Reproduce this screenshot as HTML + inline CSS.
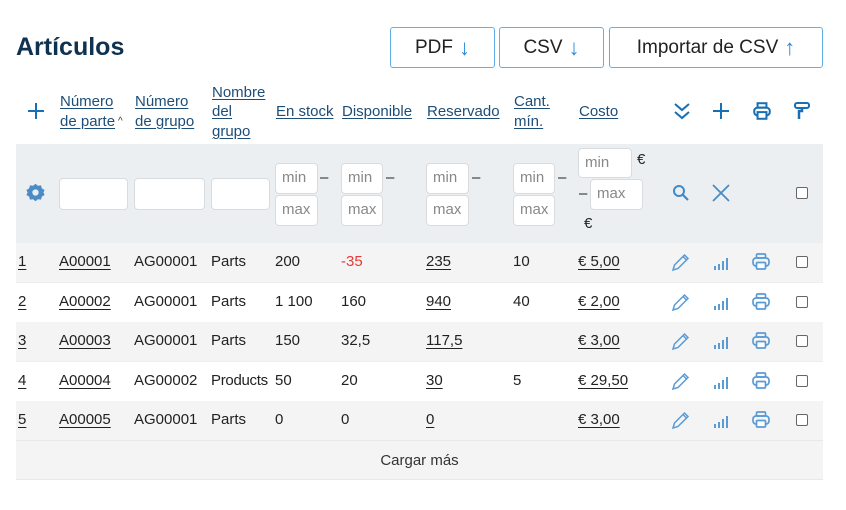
<!DOCTYPE html>
<html><head><meta charset="utf-8"><style>
*{margin:0;padding:0;box-sizing:border-box}
body{width:846px;height:510px;background:#fff;font-family:"Liberation Sans",sans-serif;font-size:15px;color:#222;position:relative;overflow:hidden}
.a{position:absolute;white-space:nowrap;line-height:20px}
.h{color:#1d4e78;text-decoration:underline;text-underline-offset:2px}
.u{text-decoration:underline;text-underline-offset:3px}
.btn{position:absolute;top:27px;height:41px;border:1px solid #5fb0ea;border-radius:3px;font-size:19px;color:#222;display:flex;align-items:center;justify-content:center;gap:6px}
.btn b{color:#2a8ad8;font-size:22px;font-weight:bold}
.in{position:absolute;background:#fff;border:1px solid #d8dcdf;border-radius:4px;color:#888;font-size:15px;padding-left:6px;line-height:28px}
.cb{position:absolute;width:12px;height:12px;border:1.5px solid #666;border-radius:2px;background:#fff}
.row{position:absolute;left:16px;width:807px;height:40px}
svg{position:absolute}
</style></head><body>
<div class="a" style="left:16px;top:32px;font-size:25px;font-weight:bold;color:#0f3250;line-height:30px">Artículos</div>
<div class="btn" style="left:390px;width:105px">PDF <b>↓</b></div>
<div class="btn" style="left:499px;width:105px">CSV <b>↓</b></div>
<div class="btn" style="left:609px;width:214px">Importar de CSV <b>↑</b></div>

<!-- header -->
<svg style="left:27px;top:102px" width="18" height="18"><path d="M9 1v16M1 9h16" stroke="#1a6fb4" stroke-width="2"/></svg>
<div class="a h" style="left:60px;top:92px">Número</div>
<div class="a h" style="left:60px;top:112px">de parte</div><div class="a" style="left:118px;top:112px;font-size:10px;color:#333">^</div>
<div class="a h" style="left:135px;top:92px">Número</div>
<div class="a h" style="left:135px;top:112px">de grupo</div>
<div class="a h" style="left:212px;top:83px">Nombre</div>
<div class="a h" style="left:212px;top:102px">del</div>
<div class="a h" style="left:212px;top:122px">grupo</div>
<div class="a h" style="left:276px;top:102px">En stock</div>
<div class="a h" style="left:342px;top:102px">Disponible</div>
<div class="a h" style="left:427px;top:102px">Reservado</div>
<div class="a h" style="left:514px;top:92px">Cant.</div>
<div class="a h" style="left:514px;top:112px">mín.</div>
<div class="a h" style="left:579px;top:102px">Costo</div>
<svg style="left:673px;top:101px" width="18" height="20"><path d="M2 3l7 6 7-6M2 11l7 6 7-6" fill="none" stroke="#1a6fb4" stroke-width="2"/></svg>
<svg style="left:712px;top:102px" width="18" height="18"><path d="M9 1v16M1 9h16" stroke="#1a6fb4" stroke-width="2"/></svg>
<svg style="left:752px;top:101px" width="20" height="20" viewBox="0 0 18 18"><rect x="5" y="2" width="8" height="4" fill="none" stroke="#1a6fb4" stroke-width="1.8"/><rect x="2" y="6" width="14" height="7" rx="3" fill="none" stroke="#1a6fb4" stroke-width="1.8"/><rect x="5" y="10" width="8" height="6" fill="#fff" stroke="#1a6fb4" stroke-width="1.8"/></svg>
<svg style="left:793px;top:101px" width="18" height="20"><rect x="2" y="2" width="14" height="5" rx="2" fill="none" stroke="#1a6fb4" stroke-width="2"/><path d="M9 7v3H6v8" fill="none" stroke="#1a6fb4" stroke-width="2.5"/></svg>

<!-- filter band -->
<div style="position:absolute;left:16px;top:144px;width:807px;height:99px;background:#eceff2"></div>
<svg style="left:26px;top:183px" width="19" height="19" viewBox="0 0 24 24"><path fill="#4b8cc4" d="M12 1l3 2.5 4-.5 1 3.8 3.5 2L22 12l1.5 3.2-3.5 2-1 3.8-4-.5L12 23l-3-2.5-4 .5-1-3.8-3.5-2L2 12 .5 8.8l3.5-2 1-3.8 4 .5z"/><circle cx="12" cy="12" r="4" fill="#eceff2"/></svg>
<div class="in" style="left:59px;top:178px;width:69px;height:32px"></div>
<div class="in" style="left:134px;top:178px;width:71px;height:32px"></div>
<div class="in" style="left:211px;top:178px;width:59px;height:32px"></div>
<div class="in" style="left:275px;top:163px;width:43px;height:31px">min</div>
<div class="in" style="left:275px;top:195px;width:43px;height:31px">max</div>
<div class="a" style="left:320px;top:168px">–</div>
<div class="in" style="left:341px;top:163px;width:42px;height:31px">min</div>
<div class="in" style="left:341px;top:195px;width:42px;height:31px">max</div>
<div class="a" style="left:386px;top:168px">–</div>
<div class="in" style="left:426px;top:163px;width:43px;height:31px">min</div>
<div class="in" style="left:426px;top:195px;width:43px;height:31px">max</div>
<div class="a" style="left:472px;top:168px">–</div>
<div class="in" style="left:513px;top:163px;width:42px;height:31px">min</div>
<div class="in" style="left:513px;top:195px;width:42px;height:31px">max</div>
<div class="a" style="left:558px;top:168px">–</div>
<div class="in" style="left:578px;top:148px;width:54px;height:30px">min</div>
<div class="a" style="left:637px;top:150px">€</div>
<div class="a" style="left:579px;top:184px">–</div>
<div class="in" style="left:590px;top:179px;width:53px;height:31px">max</div>
<div class="a" style="left:584px;top:214px">€</div>
<svg style="left:672px;top:184px" width="18" height="18"><circle cx="7" cy="7" r="5" fill="none" stroke="#3f8ac8" stroke-width="2"/><path d="M11 11l5 5" stroke="#3f8ac8" stroke-width="2.2"/></svg>
<svg style="left:711px;top:183px" width="20" height="20"><path d="M2 2l16 16M18 2L2 18" stroke="#4b8cc4" stroke-width="1.8"/></svg>
<div class="cb" style="left:796px;top:187px"></div>

<!-- rows -->
<div class="row" style="top:243px;background:#f4f4f4"></div>
<div class="row" style="top:282px;background:#fff;border-top:1px solid #eee"></div>
<div class="row" style="top:322px;background:#f4f4f4"></div>
<div class="row" style="top:361px;background:#fff;border-top:1px solid #eee"></div>
<div class="row" style="top:401px;background:#f4f4f4"></div>
<div class="row" style="top:440px;background:#f4f4f4;border-top:1px solid #e8e8e8;border-bottom:1px solid #e8e8e8;text-align:center;line-height:40px;color:#333">Cargar más</div>

<div class="a u" style="left:18px;top:252px">1</div><div class="a u" style="left:59px;top:252px">A00001</div><div class="a" style="left:134px;top:252px">AG00001</div><div class="a" style="left:211px;top:252px">Parts</div><div class="a" style="left:275px;top:252px">200</div><div class="a" style="left:341px;top:252px;color:#e53935">-35</div><div class="a u" style="left:426px;top:252px">235</div><div class="a" style="left:513px;top:252px">10</div><div class="a u" style="left:578px;top:252px">€ 5,00</div>
<div class="a u" style="left:18px;top:292px">2</div><div class="a u" style="left:59px;top:292px">A00002</div><div class="a" style="left:134px;top:292px">AG00001</div><div class="a" style="left:211px;top:292px">Parts</div><div class="a" style="left:275px;top:292px">1 100</div><div class="a" style="left:341px;top:292px">160</div><div class="a u" style="left:426px;top:292px">940</div><div class="a" style="left:513px;top:292px">40</div><div class="a u" style="left:578px;top:292px">€ 2,00</div>
<div class="a u" style="left:18px;top:331px">3</div><div class="a u" style="left:59px;top:331px">A00003</div><div class="a" style="left:134px;top:331px">AG00001</div><div class="a" style="left:211px;top:331px">Parts</div><div class="a" style="left:275px;top:331px">150</div><div class="a" style="left:341px;top:331px">32,5</div><div class="a u" style="left:426px;top:331px">117,5</div><div class="a u" style="left:578px;top:331px">€ 3,00</div>
<div class="a u" style="left:18px;top:371px">4</div><div class="a u" style="left:59px;top:371px">A00004</div><div class="a" style="left:134px;top:371px">AG00002</div><div class="a" style="left:211px;top:371px;letter-spacing:-0.3px">Products</div><div class="a" style="left:275px;top:371px">50</div><div class="a" style="left:341px;top:371px">20</div><div class="a u" style="left:426px;top:371px">30</div><div class="a" style="left:513px;top:371px">5</div><div class="a u" style="left:578px;top:371px">€ 29,50</div>
<div class="a u" style="left:18px;top:410px">5</div><div class="a u" style="left:59px;top:410px">A00005</div><div class="a" style="left:134px;top:410px">AG00001</div><div class="a" style="left:211px;top:410px">Parts</div><div class="a" style="left:275px;top:410px">0</div><div class="a" style="left:341px;top:410px">0</div><div class="a u" style="left:426px;top:410px">0</div><div class="a u" style="left:578px;top:410px">€ 3,00</div>

<svg width="0" height="0"><defs>
<g id="pen"><path d="M2 18l1.5-5 10-10 3.5 3.5-10 10z M12 4.5l3.5 3.5" fill="none" stroke="#5b9bd5" stroke-width="1.5"/></g>
<g id="bars" fill="#5b9bd5"><rect x="1" y="11" width="2" height="4"/><rect x="5" y="9" width="2" height="6"/><rect x="9" y="6" width="2" height="9"/><rect x="13" y="3" width="2" height="12"/></g>
<g id="pr"><rect x="5.5" y="2" width="9" height="4" rx="1" fill="none" stroke="#5b9bd5" stroke-width="1.7"/><rect x="2" y="6" width="16" height="8" rx="3" fill="none" stroke="#5b9bd5" stroke-width="1.7"/><rect x="5.5" y="10.5" width="9" height="6.5" rx="1" fill="#fff" stroke="#5b9bd5" stroke-width="1.7"/></g>
</defs></svg>
<svg style="left:671px;top:252px" width="20" height="20"><use href="#pen"/></svg><svg style="left:713px;top:255px" width="17" height="17"><use href="#bars"/></svg><svg style="left:751px;top:252px" width="20" height="20"><use href="#pr"/></svg><div class="cb" style="left:796px;top:256px"></div>
<svg style="left:671px;top:292px" width="20" height="20"><use href="#pen"/></svg><svg style="left:713px;top:295px" width="17" height="17"><use href="#bars"/></svg><svg style="left:751px;top:292px" width="20" height="20"><use href="#pr"/></svg><div class="cb" style="left:796px;top:296px"></div>
<svg style="left:671px;top:331px" width="20" height="20"><use href="#pen"/></svg><svg style="left:713px;top:334px" width="17" height="17"><use href="#bars"/></svg><svg style="left:751px;top:331px" width="20" height="20"><use href="#pr"/></svg><div class="cb" style="left:796px;top:335px"></div>
<svg style="left:671px;top:371px" width="20" height="20"><use href="#pen"/></svg><svg style="left:713px;top:374px" width="17" height="17"><use href="#bars"/></svg><svg style="left:751px;top:371px" width="20" height="20"><use href="#pr"/></svg><div class="cb" style="left:796px;top:375px"></div>
<svg style="left:671px;top:410px" width="20" height="20"><use href="#pen"/></svg><svg style="left:713px;top:413px" width="17" height="17"><use href="#bars"/></svg><svg style="left:751px;top:410px" width="20" height="20"><use href="#pr"/></svg><div class="cb" style="left:796px;top:414px"></div>
</body></html>
